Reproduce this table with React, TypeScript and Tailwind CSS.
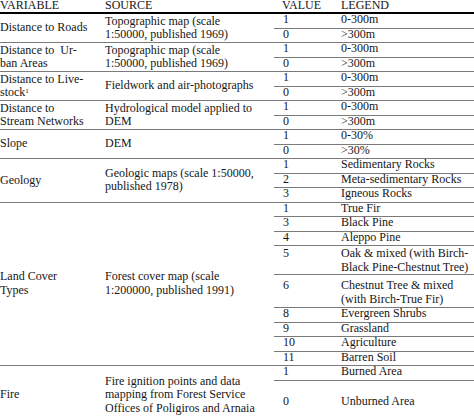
import type { ReactNode } from 'react';

type Item = {
  value: string;
  legend: ReactNode;
  // height + alignment of the sub-row
  cls?: string;
};

type Row = {
  variable: ReactNode;
  source: ReactNode;
  items: Item[];
};

const rows: Row[] = [
  {
    variable: 'Distance to Roads',
    source: (
      <>
        Topographic map (scale
        <br />
        1:50000, published 1969)
      </>
    ),
    items: [
      { value: '1', legend: '0-300m' },
      { value: '0', legend: '>300m' },
    ],
  },
  {
    variable: (
      <>
        {'Distance to  Ur-'}
        <br />
        ban Areas
      </>
    ),
    source: (
      <>
        Topographic map (scale
        <br />
        1:50000, published 1969)
      </>
    ),
    items: [
      { value: '1', legend: '0-300m' },
      { value: '0', legend: '>300m' },
    ],
  },
  {
    variable: (
      <>
        Distance to Live-
        <br />
        stock<sup className="text-[7px]">1</sup>
      </>
    ),
    source: 'Fieldwork and air-photographs',
    items: [
      { value: '1', legend: '0-300m' },
      { value: '0', legend: '>300m' },
    ],
  },
  {
    variable: (
      <>
        Distance to
        <br />
        Stream Networks
      </>
    ),
    source: (
      <>
        Hydrological model applied to
        <br />
        DEM
      </>
    ),
    items: [
      { value: '1', legend: '0-300m' },
      { value: '0', legend: '>300m' },
    ],
  },
  {
    variable: 'Slope',
    source: 'DEM',
    items: [
      { value: '1', legend: '0-30%' },
      { value: '0', legend: '>30%' },
    ],
  },
  {
    variable: 'Geology',
    source: (
      <>
        Geologic maps (scale 1:50000,
        <br />
        published 1978)
      </>
    ),
    items: [
      { value: '1', legend: 'Sedimentary Rocks' },
      { value: '2', legend: 'Meta-sedimentary Rocks' },
      { value: '3', legend: 'Igneous Rocks' },
    ],
  },
  {
    variable: (
      <>
        Land Cover
        <br />
        Types
      </>
    ),
    source: (
      <>
        Forest cover map (scale
        <br />
        1:200000, published 1991)
      </>
    ),
    items: [
      { value: '1', legend: 'True Fir' },
      { value: '3', legend: 'Black Pine' },
      { value: '4', legend: 'Aleppo Pine' },
      {
        value: '5',
        legend: (
          <>
            Oak &amp; mixed (with Birch-
            <br />
            Black Pine-Chestnut Tree)
          </>
        ),
        cls: 'h-[29px] items-start pt-[1px]',
      },
      {
        value: '6',
        legend: (
          <>
            Chestnut Tree &amp; mixed
            <br />
            (with Birch-True Fir)
          </>
        ),
        cls: 'h-[33px] items-start pt-[4px]',
      },
      { value: '8', legend: 'Evergreen Shrubs' },
      { value: '9', legend: 'Grassland' },
      { value: '10', legend: 'Agriculture' },
      { value: '11', legend: 'Barren Soil' },
    ],
  },
  {
    variable: 'Fire',
    source: (
      <>
        Fire ignition points and data
        <br />
        mapping from Forest Service
        <br />
        Offices of Poligiros and Arnaia
      </>
    ),
    items: [
      { value: '1', legend: 'Burned Area' },
      { value: '0', legend: 'Unburned Area', cls: 'h-[44px] items-center' },
    ],
  },
];

function TableRow({ row }: { row: Row }) {
  return (
    <div className="flex">
      <div className="flex w-[274px] shrink-0 border-b border-[#7a7a7a]">
        <div className="flex w-[105px] shrink-0 flex-col justify-center whitespace-pre">
          <div>{row.variable}</div>
        </div>
        <div className="flex flex-1 flex-col justify-center whitespace-nowrap">
          <div>{row.source}</div>
        </div>
      </div>
      <div className="flex flex-1 flex-col">
        {row.items.map((item, i) => (
          <div
            key={i}
            className={`flex border-b border-[#7a7a7a] ${item.cls ?? 'h-[14.5px] items-center pb-[2px]'}`}
          >
            <div className="w-[67px] shrink-0 pl-[9px]">{item.value}</div>
            <div className="flex-1 whitespace-nowrap">{item.legend}</div>
          </div>
        ))}
      </div>
    </div>
  );
}

export default function App() {
  return (
    <div className="h-[416px] w-[474px] overflow-hidden bg-white text-[#161616]">
      <div className="-mt-[3px] font-['Liberation_Serif','Times_New_Roman',serif] text-[12px] leading-[13.5px]">
        <div className="flex h-[17px] items-center border-b-2 border-black leading-[14px]">
          <div className="w-[105px] shrink-0">VARIABLE</div>
          <div className="w-[169px] shrink-0">SOURCE</div>
          <div className="w-[67px] shrink-0 pl-[8px]">VALUE</div>
          <div className="flex-1">LEGEND</div>
        </div>
        {rows.map((row, i) => (
          <TableRow key={i} row={row} />
        ))}
      </div>
    </div>
  );
}
